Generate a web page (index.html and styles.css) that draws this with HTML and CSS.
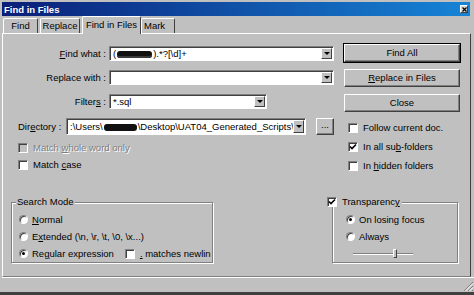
FILE: index.html
```html
<!DOCTYPE html>
<html>
<head>
<meta charset="utf-8">
<title>Find in Files</title>
<link rel="stylesheet" href="styles.css">
</head>
<body>
<div class="window">
  <div class="titlebar">
    <span class="title">Find in Files</span>
    <span class="close"><svg width="5" height="5" viewBox="0 0 5 5"><path d="M0.5 0.5L4.5 4.5M4.5 0.5L0.5 4.5" stroke="#000" stroke-width="1.2"/></svg></span>
  </div>
  <div class="tabs">
    <div class="tab t-find">Find</div>
    <div class="tab t-replace">Replace</div>
    <div class="tab active t-fif">Find in Files</div>
    <div class="tab t-mark">Mark</div>
  </div>
  <div class="panel">
    <div class="upper">
      <div class="left">
        <div class="row">
          <span class="lbl"><u>F</u>ind what :</span>
          <div class="combo w-long"><div class="val">(<span class="redact r-find"></span>).*?[\d]+</div><span class="drop"></span></div>
        </div>
        <div class="row">
          <span class="lbl">Replace with :</span>
          <div class="combo w-long"><div class="val"></div><span class="drop"></span></div>
        </div>
        <div class="row">
          <span class="lbl">Filter<u>s</u> :</span>
          <div class="combo w-short"><div class="val">*.sql</div><span class="drop"></span></div>
        </div>
        <div class="dirrow">
          <span class="dirlbl">Dir<u>e</u>ctory :</span>
          <div class="combo w-dir"><div class="val">:\Users\<span class="redact r-dir"></span>\Desktop\UAT04_Generated_Scripts\</div><span class="drop"></span></div>
          <span class="browse">...</span>
        </div>
        <div class="chkrow disabled"><span class="chk"></span><span>Match <u>w</u>hole word only</span></div>
        <div class="chkrow"><span class="chk"></span><span>Match <u>c</u>ase</span></div>
      </div>
      <div class="right">
        <div class="btn default">Find All</div>
        <div class="btn"><u>R</u>eplace in Files</div>
        <div class="btn last">Close</div>
        <div class="rchk"><span class="chk"></span><span>Follow current doc.</span></div>
        <div class="rchk"><span class="chk on"><svg width="8" height="8" viewBox="0 0 8 8"><path d="M1 3.5L3 5.5L7 1.5" fill="none" stroke="#000" stroke-width="1.6"/></svg></span><span>In all su<u>b</u>-folders</span></div>
        <div class="rchk"><span class="chk"></span><span>In <u>h</u>idden folders</span></div>
      </div>
    </div>
    <div class="lower">
      <div class="group search">
        <div class="glabel">Search Mode</div>
        <div class="opt"><span class="radio"></span><span><u>N</u>ormal</span></div>
        <div class="opt"><span class="radio"></span><span>E<u>x</u>tended (\n, \r, \t, \0, \x...)</span></div>
        <div class="opt"><span class="radio on"></span><span>Re<u>g</u>ular expression</span>
          <span class="nl"><span class="chk"></span><span><u>.</u> matches newline</span></span>
        </div>
      </div>
      <div class="group transp">
        <div class="glabel tlabel"><span class="chk on"><svg width="8" height="8" viewBox="0 0 8 8"><path d="M1 3.5L3 5.5L7 1.5" fill="none" stroke="#000" stroke-width="1.6"/></svg></span><span>Transparenc<u>y</u></span></div>
        <div class="opt"><span class="radio on"></span><span>On losing focus</span></div>
        <div class="opt"><span class="radio"></span><span>Always</span></div>
        <div class="slider"><span class="track"></span><span class="thumb"></span></div>
      </div>
    </div>
  </div>
  <div class="status">
    <svg class="grip" width="11" height="11" viewBox="0 0 11 11">
      <path d="M10 1L1 10M10 5L5 10M10 9L9 10" stroke="#808080" stroke-width="1"/>
      <path d="M10 2.5L2.5 10M10 6.5L6.5 10" stroke="#fff" stroke-width="1"/>
    </svg>
  </div>
</div>
</body>
</html>
```
FILE: styles.css
```css
* { box-sizing: border-box; margin: 0; padding: 0; }
body {
  width: 474px; height: 295px; overflow: hidden;
  background: #c0c0c0;
  font-family: "Liberation Sans", Arial, sans-serif;
  font-size: 9.5px; color: #000;
}
.window {
  height: 295px;
  padding: 2px 0 0 2px;
  display: flex; flex-direction: column;
  border-bottom: 3px solid #404040;
}
.titlebar {
  width: 468px; height: 14px; flex: none;
  background: linear-gradient(to right, #0a1e78, #1684d6);
  display: flex; align-items: center; justify-content: space-between;
  padding: 0 2px 0 2px;
}
.title { color: #fff; font-weight: bold; font-size: 9.5px; }
.close {
  width: 8px; height: 8px;
  background: #d8d8d8;
  border: 1px solid; border-color: #fff #404040 #404040 #fff;
  display: flex; align-items: center; justify-content: center;
}
.tabs {
  height: 17px; flex: none;
  display: flex; align-items: flex-end;
  padding-left: 1px;
}
.tab {
  height: 15px; line-height: 13px;
  border: 1px solid; border-bottom: none;
  border-color: #fff #404040 #fff #fff;
  border-radius: 2px 2px 0 0;
  text-align: center;
  margin-right: 2px;
  background: #c0c0c0;
}
.t-find { width: 35px; }
.t-replace { width: 40px; }
.t-fif { width: 59px; }
.t-mark { width: 34px; text-align: left; padding-left: 2px; }
.tab.active {
  height: 18px; line-height: 15px;
  margin-bottom: -1px; margin-right: 0;
  position: relative; z-index: 1;
}
.panel {
  width: 469px; height: 244px; flex: none;
  border: 1px solid; border-color: #fff #404040 #808080 #fff;
  display: flex; flex-direction: column;
}
.upper { display: flex; height: 141px; flex: none; }
.left { width: 341px; padding-top: 12px; display: flex; flex-direction: column; }
.row { display: flex; align-items: center; height: 15px; margin-bottom: 9px; }
.lbl { width: 103px; text-align: right; margin-right: 3px; white-space: nowrap; }
.combo {
  height: 15px; display: flex; align-items: center;
  background: #fff;
  border: 1px solid; border-color: #808080 #fff #fff #808080;
  box-shadow: inset 1px 1px 0 #404040;
}
.w-long { width: 225px; }
.w-short { width: 158px; }
.w-dir { width: 240px; height: 17px; }
.val {
  flex: 1; min-width: 0;
  padding-left: 3px;
  white-space: nowrap; overflow: hidden;
  line-height: 12px;
}
.drop {
  width: 11px; height: 11px; flex: none;
  margin-right: 1px;
  background: #c0c0c0;
  border: 1px solid; border-color: #fff #404040 #404040 #fff;
  display: flex; align-items: center; justify-content: center;
}
.w-dir .drop { height: 13px; }
.drop::after {
  content: "";
  border-left: 3px solid transparent; border-right: 3px solid transparent;
  border-top: 3px solid #000;
}
.redact {
  display: inline-block; vertical-align: -1px;
  height: 7px; background: #111; border-radius: 3px;
}
.r-find { width: 35px; margin: 0 1px; box-shadow: inset 0 -2px 0 #3a3a3a; }
.r-dir { width: 33px; margin: 0 1px; }
.dirrow { display: flex; align-items: center; height: 17px; margin-bottom: 4px; padding-left: 15px; }
.dirlbl { width: 48px; white-space: nowrap; }
.browse {
  width: 18px; height: 17px; margin-left: 10px;
  border: 1px solid; border-color: #fff #404040 #404040 #fff;
  box-shadow: inset -1px -1px 0 #808080;
  text-align: center; line-height: 12px;
}
.chkrow { display: flex; align-items: center; height: 17px; padding-left: 15px; }
.chk {
  width: 10px; height: 10px; flex: none;
  margin-right: 5px;
  background: #fff;
  border: 1px solid; border-color: #808080 #fff #fff #808080;
  box-shadow: inset 1px 1px 0 #404040;
  display: flex; align-items: center; justify-content: center;
}
.disabled { color: #808080; text-shadow: 1px 1px 0 #fff; }
.disabled .chk { background: #c0c0c0; }
.right { width: 126px; padding-top: 10px; display: flex; flex-direction: column; }
.btn {
  width: 116px; height: 18px; margin-bottom: 7px;
  border: 1px solid; border-color: #fff #404040 #404040 #fff;
  box-shadow: inset -1px -1px 0 #808080;
  text-align: center; line-height: 16px;
}
.btn.default { outline: 1px solid #000; }
.btn.last { margin-bottom: 6px; }
.rchk { display: flex; align-items: center; height: 19px; padding-left: 4px; }
.lower { display: flex; margin-top: 27px; }
.group {
  height: 61px;
  border: 1px solid #808080;
  box-shadow: 1px 1px 0 #fff, inset 1px 1px 0 #fff;
  display: flex; flex-direction: column;
}
.glabel {
  align-self: flex-start;
  margin: -6px 0 4px 4px;
  padding: 0 1px;
  line-height: 10px; height: 10px;
  background: #c0c0c0;
}
.search { width: 202px; margin-left: 8px; }
.transp { width: 126px; margin-left: auto; margin-right: 12px; }
.tlabel { display: flex; align-items: center; margin-left: -6px; padding: 0 2px 0 0; }
.tlabel .chk { margin-right: 5px; }
.opt { display: flex; align-items: center; height: 17px; padding-left: 7px; white-space: nowrap; }
.transp .opt { padding-left: 13px; }
.radio {
  width: 9px; height: 9px; flex: none;
  margin-right: 4px;
  border-radius: 50%;
  background: #fff;
  border: 1px solid; border-color: #808080 #fff #fff #808080;
  box-shadow: inset 1px 1px 0 #404040;
  display: flex; align-items: center; justify-content: center;
}
.radio.on::after { content: ""; width: 3px; height: 3px; border-radius: 50%; background: #000; }
.nl { display: flex; align-items: center; margin-left: 11px; width: 86px; overflow: hidden; }
.slider { display: flex; align-items: center; height: 17px; padding-left: 20px; }
.track {
  width: 60px; height: 2px;
  border-top: 1px solid #808080; border-bottom: 1px solid #fff;
}
.thumb {
  width: 4px; height: 9px; margin-left: -20px;
  background: #c0c0c0;
  border: 1px solid; border-color: #fff #404040 #404040 #fff;
}
.status {
  width: 472px; height: 15px; flex: none;
  border-top: 1px solid #fff;
  display: flex; justify-content: flex-end; align-items: flex-end;
}
.grip { display: block; }
```
